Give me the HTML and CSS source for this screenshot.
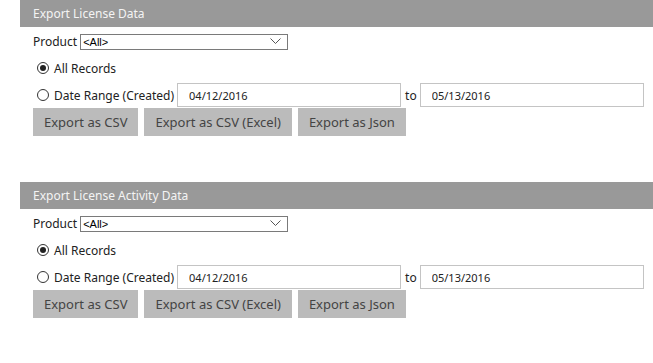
FILE: index.html
```html
<!DOCTYPE html>
<html>
<head>
    <title>Export Data</title>
    <link rel="stylesheet" href="styles.css">
</head>
<body>
    <div class="panel">
        <div class="panel-title">Export License Data</div>
        <div class="panel-body">
            <div class="row product-row">
                <label>Product</label>
                <span class="select-wrap">
                    <select class="product-select">
                        <option>&lt;All&gt;</option>
                    </select>
                    <svg class="chevron" width="11" height="7" viewBox="0 0 11 7"><path d="M0.5 0.5 L5.5 5.5 L10.5 0.5" fill="none" stroke="#555" stroke-width="1"/></svg>
                </span>
            </div>
            <div class="row radio-row">
                <input type="radio" name="range1" checked>
                <label>All Records</label>
            </div>
            <div class="row date-row">
                <input type="radio" name="range1">
                <label>Date Range (Created)</label>
                <input type="text" class="date-input" value="04/12/2016">
                <label class="to">to</label>
                <input type="text" class="date-input" value="05/13/2016">
            </div>
            <div class="buttons">
                <div class="button">Export as CSV</div>
                <div class="button">Export as CSV (Excel)</div>
                <div class="button">Export as Json</div>
            </div>
        </div>
    </div>

    <div class="panel">
        <div class="panel-title">Export License Activity Data</div>
        <div class="panel-body">
            <div class="row product-row">
                <label>Product</label>
                <span class="select-wrap">
                    <select class="product-select">
                        <option>&lt;All&gt;</option>
                    </select>
                    <svg class="chevron" width="11" height="7" viewBox="0 0 11 7"><path d="M0.5 0.5 L5.5 5.5 L10.5 0.5" fill="none" stroke="#555" stroke-width="1"/></svg>
                </span>
            </div>
            <div class="row radio-row">
                <input type="radio" name="range2" checked>
                <label>All Records</label>
            </div>
            <div class="row date-row">
                <input type="radio" name="range2">
                <label>Date Range (Created)</label>
                <input type="text" class="date-input" value="04/12/2016">
                <label class="to">to</label>
                <input type="text" class="date-input" value="05/13/2016">
            </div>
            <div class="buttons">
                <div class="button">Export as CSV</div>
                <div class="button">Export as CSV (Excel)</div>
                <div class="button">Export as Json</div>
            </div>
        </div>
    </div>
</body>
</html>
```

FILE: styles.css
```css
body {
    margin: 0;
    padding-left: 20px;
    font-family: "Noto Sans", "Open Sans", sans-serif;
    font-size: 12px;
    color: #222;
    background: #fff;
}
.panel {
    margin-bottom: 46px;
}
.panel-title {
    height: 27px;
    line-height: 27px;
    background-color: #999999;
    color: #f4f4f4;
    padding-left: 13px;
    font-size: 12px;
}
.panel-body {
    padding-left: 13px;
}
.row {
    display: flex;
    align-items: center;
}
.product-row {
    margin-top: 6px;
    height: 16px;
}
.product-row label {
    margin-right: 3px;
}
.select-wrap {
    position: relative;
    display: inline-block;
}
.product-select {
    -webkit-appearance: none;
    appearance: none;
    width: 208px;
    height: 16px;
    border: 1px solid #7a7a7a;
    border-radius: 0;
    background: #fff;
    font-family: "Liberation Sans", Arial, sans-serif;
    font-size: 11px;
    color: #000;
    padding: 0 0 0 2px;
    margin: 0;
    outline: none;
}
.chevron {
    position: absolute;
    right: 7px;
    top: 5px;
}
.radio-row {
    height: 24px;
    margin-top: 7px;
    padding-left: 4px;
}
.date-row {
    margin-top: 3px;
    height: 24px;
    padding-left: 4px;
}
input[type="radio"] {
    -webkit-appearance: none;
    appearance: none;
    width: 12px;
    height: 12px;
    border: 1px solid #333;
    border-radius: 50%;
    margin: 0 5px 0 0;
    box-sizing: border-box;
    position: relative;
    background: #fff;
}
input[type="radio"]:checked::after {
    content: "";
    position: absolute;
    left: 2px;
    top: 2px;
    width: 6px;
    height: 6px;
    border-radius: 50%;
    background: #222;
}
.date-input {
    width: 224px;
    height: 24px;
    box-sizing: border-box;
    border: 1px solid #c4c4c4;
    padding: 0 0 0 11px;
    font-family: "Noto Sans", "Open Sans", sans-serif;
    font-size: 11px;
    color: #222;
    margin: 0 0 0 3px;
    outline: none;
}
.to {
    margin-left: 4px;
}
.buttons {
    display: flex;
    gap: 6px;
    margin-top: 1px;
}
.button {
    height: 28px;
    line-height: 28px;
    padding: 0 11px;
    font-size: 13px;
    background-color: #bbbbbb;
    color: #444;
    cursor: pointer;
}
.button:hover {
    background-color: #aaaaaa;
}
```
